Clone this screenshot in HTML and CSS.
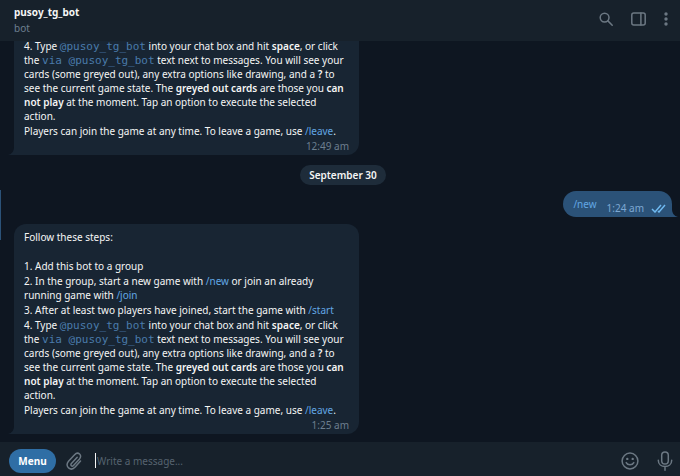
FILE: index.html
```
<!DOCTYPE html>
<html lang="en">
<head>
  <meta charset="UTF-8"/>
  <meta name="viewport" content="width=device-width,initial-scale=1"/>
  <title>pusoy_tg_bot</title>
  <link rel="stylesheet" href="styles.css">
</head>
<body>

  <header class="topbar">
    <div class="peer">
      <h1 class="peer-name">pusoy_tg_bot</h1>
      <span class="peer-status">bot</span>
    </div>
    <div class="topbar-actions">
      <button class="icon-btn" aria-label="Search">
        <svg width="14" height="14" viewBox="0 0 14 14"><circle cx="5.6" cy="5.6" r="4.4"/><path d="M8.9 8.9 13.2 13.2"/></svg>
      </button>
      <button class="icon-btn" aria-label="Info panel">
        <svg width="15" height="14" viewBox="0 0 15 14"><rect x="0.8" y="1" width="13.4" height="12" rx="2"/><path d="M9.9 1v12"/></svg>
      </button>
      <button class="icon-btn" aria-label="More">
        <svg class="dots" width="4" height="14" viewBox="0 0 4 14"><circle cx="2" cy="2" r="1.7"/><circle cx="2" cy="7" r="1.7"/><circle cx="2" cy="12" r="1.7"/></svg>
      </button>
    </div>
  </header>

  <main class="history">
    <span class="unread-mark"></span>

    <article class="bubble in scrolled">
      <p>4. Type <code>@pusoy_tg_bot</code> into your chat box and hit <b>space</b>, or click the <code>via @pusoy_tg_bot</code> text next to messages. You will see your cards (some greyed out), any extra options like drawing, and a <b>?</b> to see the current game state. The <b>greyed out cards</b> are those you <b>can not play</b> at the moment. Tap an option to execute the selected action.</p>
      <p>Players can join the game at any time. To leave a game, use <a href="#">/leave</a>.</p>
      <time>12:49 am</time>
      <svg class="tail" width="7" height="8" viewBox="0 0 7 8"><path d="M7 0v8H0C4 7 6 4 6 0z"/></svg>
    </article>

    <div class="date">September 30</div>

    <article class="bubble out">
      <p><a href="#">/new</a></p>
      <time>1:24 am</time>
      <svg class="checks" width="15" height="9" viewBox="0 0 15 9"><path d="M1 5 4 8 10 1M7 7 8 8 14 1"/></svg>
      <svg class="tail" width="7" height="8" viewBox="0 0 7 8"><path d="M0 0v8H7C3 7 1 4 1 0z"/></svg>
    </article>

    <article class="bubble in">
      <p class="lead">Follow these steps:</p>
      <p>1. Add this bot to a group</p>
      <p>2. In the group, start a new game with <a href="#">/new</a> or join an already running game with <a href="#">/join</a></p>
      <p>3. After at least two players have joined, start the game with <a href="#">/start</a></p>
      <p>4. Type <code>@pusoy_tg_bot</code> into your chat box and hit <b>space</b>, or click the <code>via @pusoy_tg_bot</code> text next to messages. You will see your cards (some greyed out), any extra options like drawing, and a <b>?</b> to see the current game state. The <b>greyed out cards</b> are those you <b>can not play</b> at the moment. Tap an option to execute the selected action.</p>
      <p>Players can join the game at any time. To leave a game, use <a href="#">/leave</a>.</p>
      <time>1:25 am</time>
      <svg class="tail" width="7" height="8" viewBox="0 0 7 8"><path d="M7 0v8H0C4 7 6 4 6 0z"/></svg>
    </article>
  </main>

  <footer class="composer">
    <button class="menu-btn">Menu</button>
    <button class="icon-btn" aria-label="Attach">
      <svg width="16" height="18" viewBox="0 0 16 18"><path d="M11.2 5.2 5.4 11.6c-1.5 1.7.6 3.5 2.1 1.9l6-6.6c3.3-3.8-1.5-7.8-4.9-4.2L2.5 9.3c-4.4 5 2.3 10.6 6.7 5.7l5.3-5.9"/></svg>
    </button>
    <span class="caret"></span>
    <input class="message" type="text" aria-label="Message" placeholder="Write a message...">
    <button class="icon-btn" aria-label="Emoji">
      <svg width="18" height="18" viewBox="0 0 18 18"><circle cx="9" cy="9" r="7.9"/><path d="M5.2 10.6c1.4 2.8 6.2 2.8 7.6 0"/><circle class="eye" cx="6.3" cy="6.9" r="1.2"/><circle class="eye" cx="11.7" cy="6.9" r="1.2"/></svg>
    </button>
    <button class="icon-btn" aria-label="Voice message">
      <svg width="16" height="20" viewBox="0 0 16 20"><rect x="4.7" y="1" width="6.6" height="12" rx="3.3"/><path d="M1.3 9.3c0 8.4 13.4 8.4 13.4 0M8 15.6v3.6"/></svg>
    </button>
  </footer>

</body>
</html>
```
FILE: styles.css
```
* {
  box-sizing: border-box;
}

body {
  margin: 0;
  height: 100vh;
  display: flex;
  flex-direction: column;
  background: #0e1621;
  color: #f5f5f5;
  font-family: "Noto Sans", "Open Sans", sans-serif;
  font-size: 10px;
  line-height: 14px;
  overflow: hidden;
}

h1, p {
  margin: 0;
}

a {
  color: #62a7e4;
  text-decoration: none;
}

b {
  font-weight: 600;
}

button {
  padding: 0;
  border: none;
  background: none;
  font: inherit;
  cursor: pointer;
}

/* header */

.topbar {
  flex: none;
  display: flex;
  justify-content: space-between;
  height: 41px;
  padding: 4px 12px 0 14px;
  background: #17212b;
}

.peer-name {
  font-size: 10px;
  line-height: 16px;
  font-weight: 700;
}

.peer-status {
  display: block;
  line-height: 16px;
  color: #6d7f8f;
}

.topbar-actions {
  display: flex;
  align-items: center;
  gap: 18px;
  height: 30px;
}

.icon-btn svg {
  display: block;
  fill: none;
  stroke: #6c7883;
  stroke-width: 1.5;
  stroke-linecap: round;
  stroke-linejoin: round;
}

.icon-btn .dots,
.icon-btn .eye {
  fill: #6c7883;
  stroke: none;
}

/* messages */

.history {
  position: relative;
  flex: 1;
  min-height: 0;
  display: flex;
  flex-direction: column;
  justify-content: flex-end;
  padding: 0 8px 8px 14px;
  overflow: hidden;
}

.unread-mark {
  position: absolute;
  left: 0;
  top: 149px;
  width: 1px;
  height: 50px;
  background: #2b5278;
}

.bubble {
  position: relative;
  flex: none;
  display: flex;
  flex-direction: column;
  gap: 1px;
}

.in {
  align-self: flex-start;
  width: 345px;
  max-width: 100%;
  padding: 6px 10px 2px;
  border-radius: 12px 12px 12px 0;
  background: #182533;
}

/* upper part runs under the header */
.scrolled {
  padding-top: 20px;
}

.lead {
  margin-bottom: 14px;
}

.bubble code {
  font-family: "DejaVu Sans Mono", monospace;
  font-size: 11px;
  line-height: 1;
  color: #4a7bab;
}

.bubble time {
  color: #6d7f8f;
}

.in time {
  align-self: flex-end;
}

.tail {
  position: absolute;
  bottom: 0;
}

.in .tail {
  left: -6px;
  fill: #182533;
}

.date {
  align-self: center;
  margin: 10px 0 6px;
  padding: 3px 9px;
  border-radius: 10px;
  background: #1e2c3a;
  font-weight: 600;
}

.out {
  align-self: flex-end;
  flex-direction: row;
  height: 26px;
  margin-bottom: 7px;
  padding: 6px 6px 0 10px;
  border-radius: 13px 13px 0 13px;
  background: #2b5278;
}

.out time {
  margin: 4px 6px 0 9px;
  color: #7da8d3;
}

.checks {
  margin-top: 7px;
  fill: none;
  stroke: #6fb9f0;
  stroke-width: 1.5;
}

.out .tail {
  right: -6px;
  fill: #2b5278;
}

/* message field */

.composer {
  flex: none;
  display: flex;
  align-items: center;
  height: 34px;
  padding: 3px 7px 0 9px;
  background: #17212b;
}

.menu-btn {
  width: 47px;
  height: 24px;
  margin-right: 10px;
  border-radius: 12px;
  background: #2f6ea5;
  color: #fff;
  font-weight: 700;
}

.caret {
  width: 1px;
  height: 15px;
  margin-left: 13px;
  background: #f5f5f5;
}

.message {
  flex: 1;
  min-width: 0;
  padding: 0 1px;
  border: none;
  outline: none;
  background: none;
  color: #f5f5f5;
  font: inherit;
}

.message::placeholder {
  color: #56636f;
}

.composer .message ~ .icon-btn {
  margin-left: 18px;
}
```
